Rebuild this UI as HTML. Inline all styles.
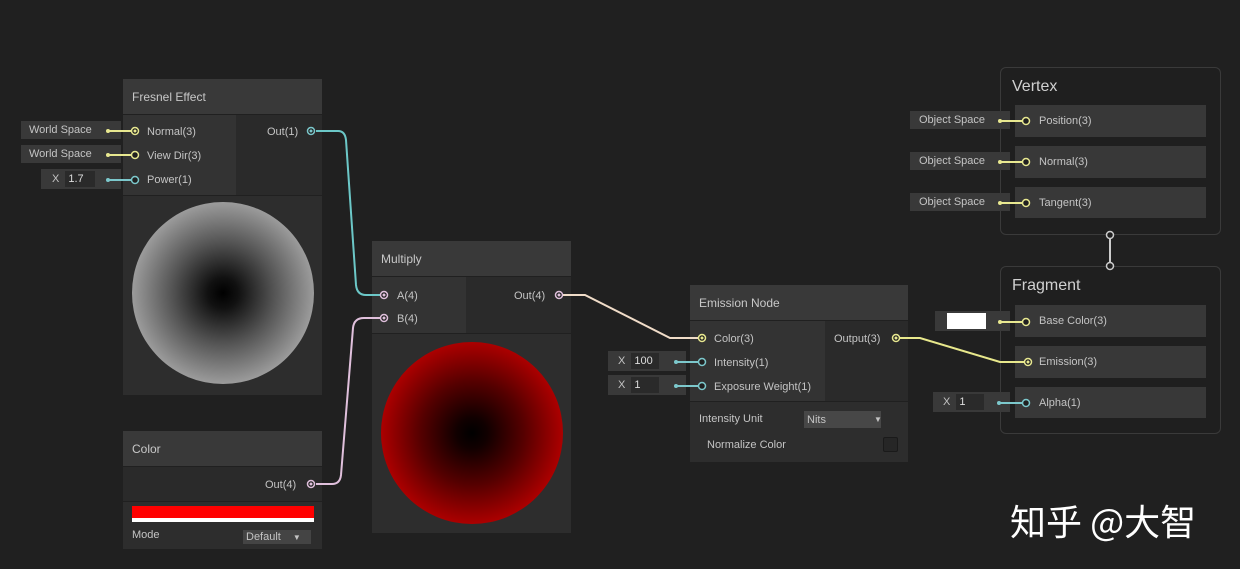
<!DOCTYPE html>
<html><head><meta charset="utf-8"><style>
*{margin:0;padding:0;box-sizing:border-box}
body{width:1240px;height:569px;background:#202020;position:relative;overflow:hidden;font-family:"Liberation Sans","Noto Sans CJK SC",sans-serif;color:#c4c4c4;font-size:11px}
.a{position:absolute}
.hd{background:#393939;color:#c8c8c8;font-size:12px;padding-left:9px;display:flex;align-items:center}
.in{background:#333}
.out{background:#2a2a2a}
.pv{background:#2d2d2d}
.box{background:#393939;color:#c4c4c4;font-size:11px;display:flex;align-items:center}
.fld{background:#2a2a2a;color:#ddd;padding-left:3px;line-height:16px}
.row{background:#383838;display:flex;align-items:center;padding-left:24px;font-size:11px}
.grp{border:1px solid #3a3a3a;border-radius:6px;background:#1f1f1f}
</style></head><body>

<!-- Fresnel -->
<div class="a hd" style="left:123px;top:79px;width:199px;height:35px">Fresnel Effect</div>
<div class="a in" style="left:123px;top:115px;width:113px;height:80px"></div>
<div class="a out" style="left:236px;top:115px;width:86px;height:80px"></div>
<div class="a" style="left:147px;top:126px">Normal(3)</div>
<div class="a" style="left:147px;top:150px">View Dir(3)</div>
<div class="a" style="left:147px;top:174px">Power(1)</div>
<div class="a" style="left:267px;top:126px">Out(1)</div>
<div class="a pv" style="left:123px;top:196px;width:199px;height:199px"></div>
<div class="a" style="left:132px;top:202px;width:182px;height:182px;border-radius:50%;background:radial-gradient(circle,#000 0%,#111 12%,#555 40%,#9a9a9a 70%,#eee 100%)"></div>
<div class="a box" style="left:21px;top:121px;width:100px;height:18px;padding-left:8px">World Space</div>
<div class="a box" style="left:21px;top:145px;width:100px;height:18px;padding-left:8px">World Space</div>
<div class="a box" style="left:41px;top:169px;width:80px;height:20px;padding-left:11px">X<span class="fld" style="margin-left:6px;width:30px;height:16px;display:inline-block">1.7</span></div>

<!-- Color -->
<div class="a hd" style="left:123px;top:431px;width:199px;height:35px">Color</div>
<div class="a out" style="left:123px;top:467px;width:199px;height:34px"></div>
<div class="a" style="left:265px;top:479px">Out(4)</div>
<div class="a pv" style="left:123px;top:502px;width:199px;height:47px"></div>
<div class="a" style="left:132px;top:506px;width:182px;height:12px;background:#f00"></div>
<div class="a" style="left:132px;top:518px;width:182px;height:4px;background:#fff"></div>
<div class="a" style="left:132px;top:529px">Mode</div>
<div class="a box" style="left:243px;top:530px;width:68px;height:14px;background:#444;padding-left:3px">Default <span style="margin-left:12px;font-size:8px">▼</span></div>

<!-- Multiply -->
<div class="a hd" style="left:372px;top:241px;width:199px;height:35px">Multiply</div>
<div class="a in" style="left:372px;top:277px;width:94px;height:56px"></div>
<div class="a out" style="left:466px;top:277px;width:105px;height:56px"></div>
<div class="a" style="left:397px;top:290px">A(4)</div>
<div class="a" style="left:397px;top:313px">B(4)</div>
<div class="a" style="left:514px;top:290px">Out(4)</div>
<div class="a pv" style="left:372px;top:334px;width:199px;height:199px"></div>
<div class="a" style="left:381px;top:342px;width:182px;height:182px;border-radius:50%;background:radial-gradient(circle,#000 0%,#100 12%,#500 40%,#a00 70%,#f00 100%)"></div>

<!-- Emission -->
<div class="a hd" style="left:690px;top:285px;width:218px;height:35px">Emission Node</div>
<div class="a in" style="left:690px;top:321px;width:135px;height:80px"></div>
<div class="a out" style="left:825px;top:321px;width:83px;height:80px"></div>
<div class="a" style="left:714px;top:333px">Color(3)</div>
<div class="a" style="left:714px;top:357px">Intensity(1)</div>
<div class="a" style="left:714px;top:381px">Exposure Weight(1)</div>
<div class="a" style="left:834px;top:333px">Output(3)</div>
<div class="a pv" style="left:690px;top:402px;width:218px;height:60px"></div>
<div class="a" style="left:699px;top:413px">Intensity Unit</div>
<div class="a box" style="left:804px;top:411px;width:77px;height:17px;background:#474747;padding-left:3px">Nits<span style="margin-left:48px;font-size:8px">▼</span></div>
<div class="a" style="left:707px;top:439px">Normalize Color</div>
<div class="a" style="left:883px;top:437px;width:15px;height:15px;background:#262626;border:1px solid #1a1a1a;border-radius:2px"></div>
<div class="a box" style="left:608px;top:351px;width:78px;height:20px;padding-left:10px">X<span class="fld" style="margin-left:6px;width:28px;height:16px;display:inline-block">100</span></div>
<div class="a box" style="left:608px;top:375px;width:78px;height:20px;padding-left:10px">X<span class="fld" style="margin-left:6px;width:28px;height:16px;display:inline-block">1</span></div>

<!-- Vertex -->
<div class="a grp" style="left:1000px;top:67px;width:221px;height:168px"></div>
<div class="a" style="left:1012px;top:78px;font-size:16px;color:#d0d0d0">Vertex</div>
<div class="a row" style="left:1015px;top:105px;width:191px;height:32px">Position(3)</div>
<div class="a row" style="left:1015px;top:146px;width:191px;height:32px">Normal(3)</div>
<div class="a row" style="left:1015px;top:187px;width:191px;height:31px">Tangent(3)</div>
<div class="a box" style="left:910px;top:111px;width:100px;height:18px;padding-left:9px">Object Space</div>
<div class="a box" style="left:910px;top:152px;width:100px;height:18px;padding-left:9px">Object Space</div>
<div class="a box" style="left:910px;top:193px;width:100px;height:18px;padding-left:9px">Object Space</div>

<!-- Fragment -->
<div class="a grp" style="left:1000px;top:266px;width:221px;height:168px"></div>
<div class="a" style="left:1012px;top:277px;font-size:16px;color:#d0d0d0">Fragment</div>
<div class="a row" style="left:1015px;top:305px;width:191px;height:32px">Base Color(3)</div>
<div class="a row" style="left:1015px;top:346px;width:191px;height:32px">Emission(3)</div>
<div class="a row" style="left:1015px;top:387px;width:191px;height:31px">Alpha(1)</div>
<div class="a box" style="left:935px;top:311px;width:75px;height:20px"><span style="margin-left:12px;width:39px;height:16px;background:#fff;display:inline-block"></span></div>
<div class="a box" style="left:933px;top:392px;width:77px;height:20px;padding-left:10px">X<span class="fld" style="margin-left:6px;width:28px;height:16px;display:inline-block">1</span></div>

<svg class="a" style="left:0;top:0" width="1240" height="569" fill="none">
<g stroke-width="2">
<path d="M316 131 H338 Q345 131 346 140 L356 285 Q357 295 366 295 H384" stroke="#6cc8c8"/>
<path d="M316 484 H332 Q340 484 341 475 L353 328 Q354 318 364 318 H384" stroke="#e0c0dc"/>
<path d="M561 295 H585 L670 338 H702" stroke="#f0dcc8"/>
<path d="M896 338 H920 L1000 362 H1028" stroke="#e8e88c"/>
<path d="M108 131 H135 M108 155 H135" stroke="#e8e890"/>
<path d="M108 180 H135 M676 362 H702 M676 386 H702 M999 403 H1022" stroke="#7cc8cc"/>
<path d="M1000 121 H1022 M1000 162 H1022 M1000 203 H1022 M1000 322 H1022" stroke="#e8e890"/>
<path d="M1110 238 V266" stroke="#ccc"/>
</g>
<g stroke-width="1.5" fill="#202020">
<circle cx="135" cy="131" r="3.5" stroke="#e8e890"/><circle cx="135" cy="155" r="3.5" stroke="#e8e890"/><circle cx="135" cy="180" r="3.5" stroke="#7cc8cc"/>
<circle cx="311" cy="131" r="3.5" stroke="#7cc8cc"/>
<circle cx="384" cy="295" r="3.5" stroke="#e0c0dc"/><circle cx="384" cy="318" r="3.5" stroke="#e0c0dc"/>
<circle cx="559" cy="295" r="3.5" stroke="#e0c0dc"/><circle cx="311" cy="484" r="3.5" stroke="#e0c0dc"/>
<circle cx="702" cy="338" r="3.5" stroke="#e8e890"/><circle cx="702" cy="362" r="3.5" stroke="#7cc8cc"/><circle cx="702" cy="386" r="3.5" stroke="#7cc8cc"/>
<circle cx="896" cy="338" r="3.5" stroke="#e8e890"/>
<circle cx="1026" cy="121" r="3.5" stroke="#e8e890"/><circle cx="1026" cy="162" r="3.5" stroke="#e8e890"/><circle cx="1026" cy="203" r="3.5" stroke="#e8e890"/>
<circle cx="1026" cy="322" r="3.5" stroke="#e8e890"/><circle cx="1028" cy="362" r="3.5" stroke="#e8e890"/><circle cx="1026" cy="403" r="3.5" stroke="#7cc8cc"/>
<circle cx="1110" cy="235" r="3.5" stroke="#ccc"/><circle cx="1110" cy="266" r="3.5" stroke="#ccc"/>
</g>
<g>
<circle cx="135" cy="131" r="1.5" fill="#e8e890"/>
<circle cx="311" cy="131" r="1.5" fill="#7cc8cc"/><circle cx="384" cy="295" r="1.5" fill="#e0c0dc"/><circle cx="384" cy="318" r="1.5" fill="#e0c0dc"/><circle cx="559" cy="295" r="1.5" fill="#e0c0dc"/><circle cx="311" cy="484" r="1.5" fill="#e0c0dc"/>
<circle cx="702" cy="338" r="1.5" fill="#e8e890"/><circle cx="896" cy="338" r="1.5" fill="#e8e890"/><circle cx="1028" cy="362" r="1.5" fill="#e8e890"/>
<circle cx="108" cy="131" r="2" fill="#e8e890"/><circle cx="108" cy="155" r="2" fill="#e8e890"/><circle cx="108" cy="180" r="2" fill="#7cc8cc"/>
<circle cx="676" cy="362" r="2" fill="#7cc8cc"/><circle cx="676" cy="386" r="2" fill="#7cc8cc"/><circle cx="999" cy="403" r="2" fill="#7cc8cc"/>
<circle cx="1000" cy="121" r="2" fill="#e8e890"/><circle cx="1000" cy="162" r="2" fill="#e8e890"/><circle cx="1000" cy="203" r="2" fill="#e8e890"/><circle cx="1000" cy="322" r="2" fill="#e8e890"/>
</g>
</svg>

<div class="a" style="left:1010px;top:494px;font-size:36px;color:#fff;font-family:'Noto Sans CJK SC',sans-serif;white-space:nowrap;letter-spacing:0px">知乎 @大智</div>
</body></html>
